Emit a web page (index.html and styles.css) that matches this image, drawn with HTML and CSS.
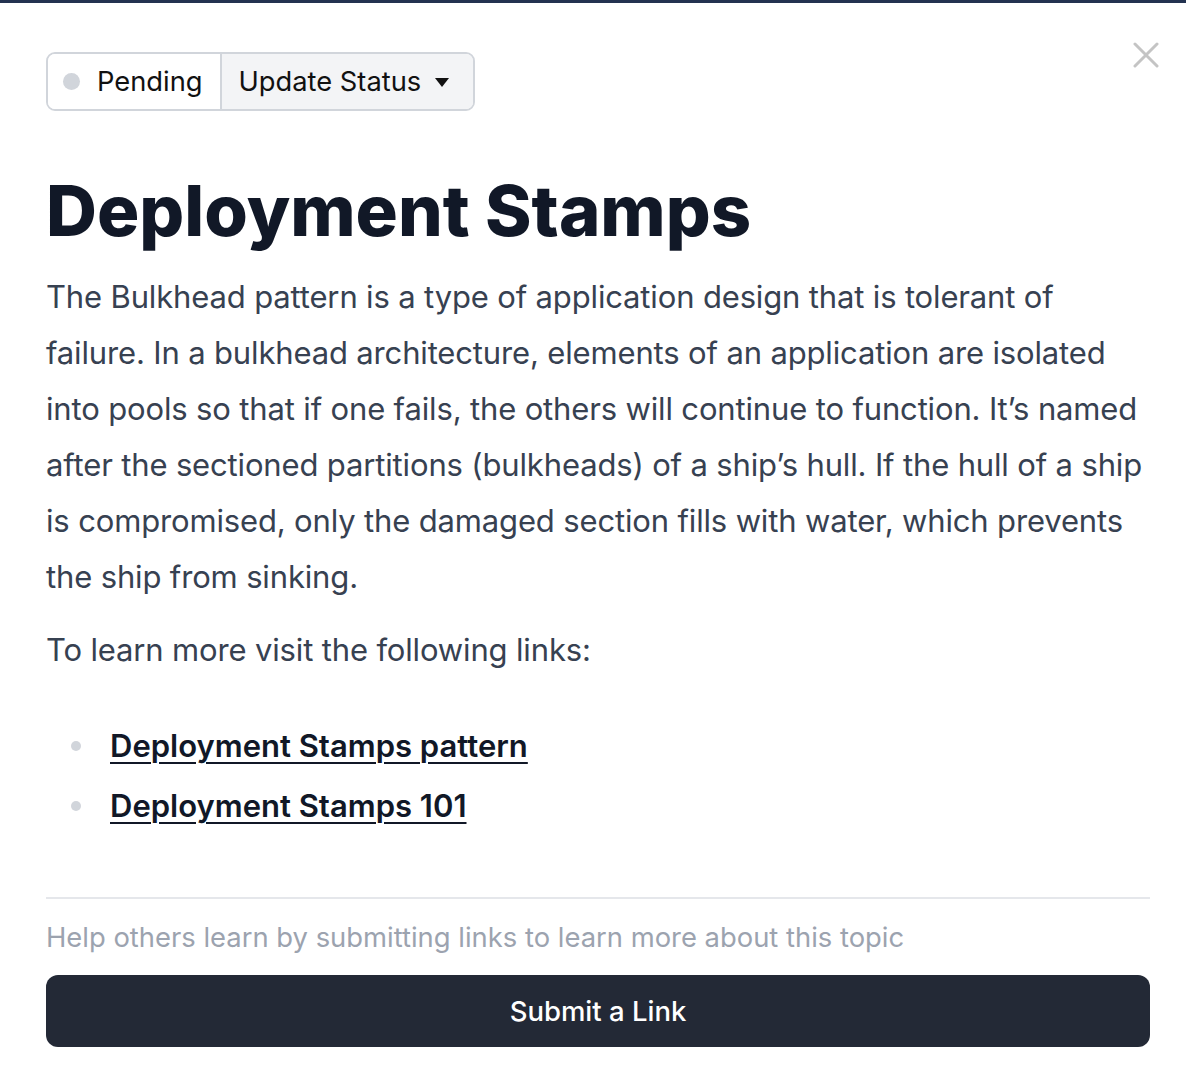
FILE: index.html
```html
<!DOCTYPE html>
<html lang="en">
<head>
<meta charset="utf-8">
<link rel="stylesheet" href="styles.css">
</head>
<body>
<div class="topbar"></div>
<div class="drawer">
  <button class="close" aria-label="Close">
    <svg viewBox="0 0 26 26" width="26" height="26"><path d="M2 2 L24 24 M24 2 L2 24" stroke="#c4c4c4" stroke-width="3" stroke-linecap="round" fill="none"/></svg>
  </button>
  <div class="status">
    <div class="status-current"><span class="dot"></span>Pending</div>
    <div class="status-update">Update Status<span class="caret"></span></div>
  </div>
  <h1 class="title">Deployment Stamps</h1>
  <p class="desc">The Bulkhead pattern is a type of application design that is tolerant of failure. In a bulkhead architecture, elements of an application are isolated into pools so that if one fails, the others will continue to function. It’s named after the sectioned partitions (bulkheads) of a ship’s hull. If the hull of a ship is compromised, only the damaged section fills with water, which prevents the ship from sinking.</p>
  <p class="desc learn">To learn more visit the following links:</p>
  <ul class="links">
    <li><a href="#">Deployment Stamps pattern</a></li>
    <li><a href="#">Deployment Stamps 101</a></li>
  </ul>
  <div class="footer">
    <p class="help">Help others learn by submitting links to learn more about this topic</p>
    <button class="submit">Submit a Link</button>
  </div>
</div>
</body>
</html>
```
FILE: styles.css
```css
* { box-sizing: border-box; }
html, body { margin: 0; padding: 0; background: #fff; }
body { font-family: Inter, "Liberation Sans", sans-serif; color: #111827; }
.topbar { height: 3px; background: #233250; }
.drawer { position: relative; padding: 49px 36px 0 46px; }
.close {
  position: absolute; top: 39px; right: 27px;
  background: none; border: 0; padding: 0; cursor: pointer; line-height: 0;
}
.status {
  display: inline-flex; height: 59px; border: 2px solid #d1d5db; border-radius: 9px; overflow: hidden;
  font-size: 27.3px; color: #111;
}
.status-current { display: flex; align-items: center; padding: 0 17px 0 15px; background: #fff; }
.dot { width: 17px; height: 17px; border-radius: 50%; background: #d1d5db; margin-right: 17px; }
.status-update {
  display: flex; align-items: center; padding: 0 24px 0 17px; background: #f3f4f6; border-left: 2px solid #d1d5db;
}
.caret {
  width: 0; height: 0; margin-left: 14px; margin-top: 2px;
  border-left: 7px solid transparent; border-right: 7px solid transparent; border-top: 9px solid #111;
}
.title {
  margin: 62px 0 0; font-size: 70.5px; line-height: 76px; font-weight: 800; letter-spacing: 0; color: #111827;
}
.desc { margin: 20px 0 0; font-size: 31px; line-height: 56px; color: #374151; letter-spacing: -0.15px; }
.learn { margin-top: 17px; }
.links { list-style: none; margin: 38px 0 0; padding: 0; }
.links li { position: relative; padding-left: 64px; font-size: 31px; line-height: 60px; }
.links li::before {
  content: ""; position: absolute; left: 25px; top: 25px; width: 10px; height: 10px; border-radius: 50%; background: #d1d5db;
}
.links a { color: #111827; font-weight: 600; text-decoration: underline; text-decoration-thickness: 2px; text-underline-offset: 5px; }
.footer { margin-top: 61px; border-top: 2px solid #e5e7eb; }
.help { margin: 20px 0 0; font-size: 27.4px; line-height: 36px; color: #9ca3af; }
.submit {
  display: block; width: 100%; height: 72px; margin-top: 20px; border: 0; border-radius: 12px;
  background: #232936; color: #fff; font-family: Inter, "Liberation Sans", sans-serif; font-size: 27.5px; font-weight: 500;
}
```
